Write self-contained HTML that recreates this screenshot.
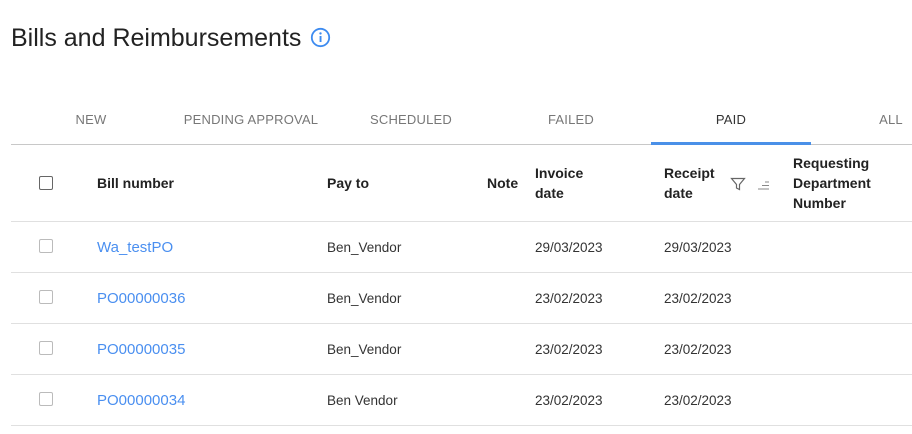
<!DOCTYPE html>
<html><head><meta charset="utf-8"><style>
*{margin:0;padding:0;box-sizing:border-box}
body{width:912px;height:434px;background:#fff;font-family:"Liberation Sans",sans-serif;color:#222;position:relative;overflow:hidden}
.a{position:absolute;white-space:nowrap}
.tab{position:absolute;top:112px;width:160px;text-align:center;font-size:13px;color:#777;letter-spacing:0.2px}
.h{font-size:14px;font-weight:bold;color:#222;line-height:20px}
.line{position:absolute;left:11px;right:0;height:1px;background:#e0e0e0}
.cb{position:absolute;width:14px;height:14px;border:1.5px solid #bbb;border-radius:2px}
.link{font-size:15px;color:#4a8ff0}
.c{font-size:13.5px;color:#333}
</style></head><body>
<div class="a" style="left:11px;top:24px;font-size:25px;color:#222;">Bills and Reimbursements</div>
<svg class="a" style="left:310px;top:27px" width="21" height="21" viewBox="0 0 21 21"><circle cx="10.5" cy="10.5" r="8.7" fill="none" stroke="#3d8bf0" stroke-width="1.8"/><rect x="9.6" y="9" width="1.9" height="6" fill="#3d8bf0"/><circle cx="10.5" cy="6.4" r="1.2" fill="#3d8bf0"/></svg>

<div class="tab" style="left:11px">NEW</div>
<div class="tab" style="left:171px">PENDING APPROVAL</div>
<div class="tab" style="left:331px">SCHEDULED</div>
<div class="tab" style="left:491px">FAILED</div>
<div class="tab" style="left:651px;color:#333">PAID</div>
<div class="tab" style="left:811px">ALL</div>
<div class="line" style="top:144px;background:#c8c8c8"></div>
<div class="a" style="left:651px;top:142px;width:160px;height:3px;background:#4a90e8"></div>

<div class="cb" style="left:39px;top:176px;border-color:#666"></div>
<div class="a h" style="left:97px;top:173px">Bill number</div>
<div class="a h" style="left:327px;top:173px">Pay to</div>
<div class="a h" style="left:487px;top:173px">Note</div>
<div class="a h" style="left:535px;top:163px">Invoice<br>date</div>
<div class="a h" style="left:664px;top:163px">Receipt<br>date</div>
<svg class="a" style="left:730px;top:177px" width="16" height="14" viewBox="0 0 16 14"><path d="M1.5 1.5H14.5L9.5 7.5V12.5L6.5 11V7.5Z" fill="none" stroke="#666" stroke-width="1.2"/></svg>
<svg class="a" style="left:757px;top:180px" width="14" height="10" viewBox="0 0 14 10"><path d="M8 2H12M5 5.5H12M1 9H12" stroke="#888" stroke-width="1"/></svg>
<div class="a h" style="left:793px;top:153px">Requesting<br>Department<br>Number</div>
<div class="line" style="top:221px"></div>

<div class="cb" style="left:39px;top:239px"></div>
<div class="a link" style="left:97px;top:239px">Wa_testPO</div>
<div class="a c" style="left:327px;top:240px">Ben_Vendor</div>
<div class="a c" style="left:535px;top:240px">29/03/2023</div>
<div class="a c" style="left:664px;top:240px">29/03/2023</div>
<div class="line" style="top:272px"></div>

<div class="cb" style="left:39px;top:290px"></div>
<div class="a link" style="left:97px;top:290px">PO00000036</div>
<div class="a c" style="left:327px;top:291px">Ben_Vendor</div>
<div class="a c" style="left:535px;top:291px">23/02/2023</div>
<div class="a c" style="left:664px;top:291px">23/02/2023</div>
<div class="line" style="top:323px"></div>

<div class="cb" style="left:39px;top:341px"></div>
<div class="a link" style="left:97px;top:341px">PO00000035</div>
<div class="a c" style="left:327px;top:342px">Ben_Vendor</div>
<div class="a c" style="left:535px;top:342px">23/02/2023</div>
<div class="a c" style="left:664px;top:342px">23/02/2023</div>
<div class="line" style="top:374px"></div>

<div class="cb" style="left:39px;top:392px"></div>
<div class="a link" style="left:97px;top:392px">PO00000034</div>
<div class="a c" style="left:327px;top:393px">Ben Vendor</div>
<div class="a c" style="left:535px;top:393px">23/02/2023</div>
<div class="a c" style="left:664px;top:393px">23/02/2023</div>
<div class="line" style="top:425px"></div>
</body></html>
